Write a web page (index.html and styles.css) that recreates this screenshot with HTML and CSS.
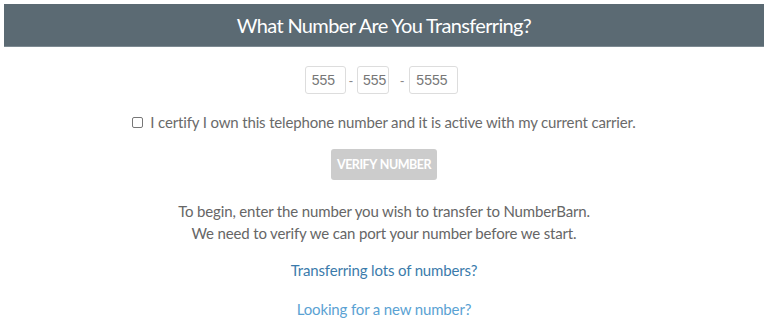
FILE: index.html
```html
<!DOCTYPE html>
<html>
<head>
<meta charset="utf-8">
<link rel="stylesheet" href="styles.css">
</head>
<body>
<div class="page">
  <div class="header">What Number Are You Transferring?</div>
  <div class="phone">
    <input class="box box-a" type="text" value="555">
    <span class="dash dash-a">-</span>
    <input class="box box-b" type="text" value="555">
    <span class="dash dash-b">-</span>
    <input class="box box-c" type="text" value="5555">
  </div>
  <label class="certify"><span class="check"></span>I certify I own this telephone number and it is active with my current carrier.</label>
  <div class="btnrow"><button class="verify">VERIFY NUMBER</button></div>
  <p class="info">To begin, enter the number you wish to transfer to NumberBarn.<br>We need to verify we can port your number before we start.</p>
  <a class="link dark" href="#">Transferring lots of numbers?</a>
  <a class="link light" href="#">Looking for a new number?</a>
</div>
</body>
</html>
```

FILE: styles.css
```css
html, body {
  margin: 0;
  padding: 0;
  background: #ffffff;
}
body {
  font-family: Lato, "Noto Sans", sans-serif;
  color: #666666;
}
.page {
  padding: 4px 4px 0 4px;
  display: flex;
  flex-direction: column;
  align-items: center;
}
.header {
  align-self: stretch;
  height: 43px;
  background: #5b6a73;
  color: #ffffff;
  font-size: 20px;
  letter-spacing: -0.65px;
  display: flex;
  align-items: center;
  justify-content: center;
  border-bottom: 1px solid #7d8a92;
  box-sizing: border-box;
}
.phone {
  margin-top: 19px;
  margin-right: 5px;
  display: flex;
  align-items: center;
}
.box {
  height: 28px;
  box-sizing: border-box;
  border: 1px solid #dddddd;
  border-radius: 3px;
  font-family: "Liberation Sans", Arial, sans-serif;
  font-size: 14px;
  color: #777777;
  padding: 0 0 0 6px;
  margin: 0;
  outline: none;
}
.box-a { width: 41px; }
.box-b { width: 32px; padding-left: 5px; }
.box-c { width: 49px; }
.dash {
  font-family: "Liberation Sans", Arial, sans-serif;
  font-size: 13px;
  color: #888888;
}
.dash-a { margin: 0 4px 0 3px; }
.dash-b { margin: 0 5px 0 11px; }
.certify {
  margin-top: 19px;
  display: flex;
  align-items: center;
  font-size: 15px;
  letter-spacing: -0.15px;
  color: #6a6a6a;
}
.check {
  width: 9px;
  height: 9px;
  border: 1px solid #777777;
  border-radius: 2px;
  margin-right: 7px;
}
.btnrow {
  margin-top: 18px;
}
.verify {
  width: 106px;
  height: 31px;
  border: none;
  border-radius: 3px;
  background: #cccccc;
  color: #ffffff;
  font-family: Lato, "Noto Sans", sans-serif;
  font-weight: 700;
  font-size: 12.5px;
  letter-spacing: -0.5px;
  word-spacing: 1px;
  padding: 0;
}
.info {
  margin: 20px 0 0 0;
  text-align: center;
  font-size: 15px;
  letter-spacing: -0.15px;
  line-height: 22px;
  color: #666666;
}
.link {
  text-decoration: none;
  font-size: 15px;
  letter-spacing: -0.15px;
}
.dark {
  margin-top: 17px;
  color: #3b7bab;
}
.light {
  margin-top: 21px;
  color: #5aa2d3;
}
```
